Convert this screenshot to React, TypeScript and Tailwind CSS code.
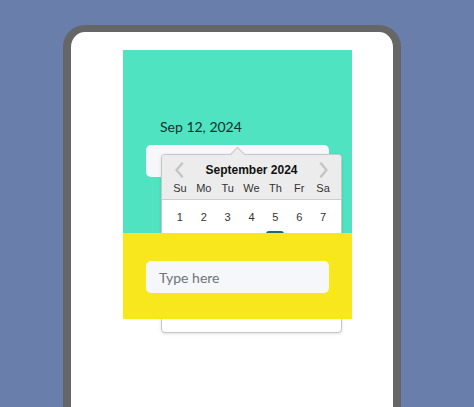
import React from "react";

const days = ["Su", "Mo", "Tu", "We", "Th", "Fr", "Sa"];
const row1 = [1, 2, 3, 4, 5, 6, 7];
const row2 = [8, 9, 10, 11, 12, 13, 14];

function Chevron({ dir }: { dir: "left" | "right" }) {
  return (
    <svg width="10" height="16" viewBox="0 0 10 16" fill="none">
      <path
        d={dir === "left" ? "M8 1.5 L2.5 8 L8 14.5" : "M2 1.5 L7.5 8 L2 14.5"}
        stroke="#c4c4c4"
        strokeWidth="2.4"
        strokeLinecap="round"
        strokeLinejoin="round"
      />
    </svg>
  );
}

export default function App() {
  return (
    <div className="w-[474px] h-[407px] overflow-hidden bg-[#6a7eab] pt-[25px] pl-[63px]">
      <div className="w-[338px] h-[400px] rounded-t-[22px] border-[8px] border-t-[7px] border-b-0 border-[#666666] bg-white pt-[18px] pl-[52px]">
        <div className="relative w-[229px] h-[183px] bg-[#50e3c2] pt-[67px] pl-[23px] font-['Lato','Noto_Sans',sans-serif]">
          <div className="pl-[14px] h-[20px] leading-[20px] text-[14px] text-[#14302b]">Sep 12, 2024</div>
          <div className="mt-[8px] w-[183px] h-[32px] rounded-[5px] bg-[#f5f7fa]" />
          {/* popup */}
          <div className="absolute left-[38px] top-[104px] z-10 w-[181px] h-[179px] rounded-[4px] border border-[#c6c6c6] bg-white shadow-[0_1px_3px_rgba(0,0,0,0.12)] font-['Liberation_Sans',Arial,sans-serif]">
            <div className="absolute left-[70px] -top-[6px] w-[11px] h-[11px] rotate-45 border-t border-l border-[#c6c6c6] bg-[#ececec]" />
            <div className="relative rounded-t-[4px] bg-[#ececec] border-b border-[#cccccc] pt-[5px] pb-[3px]">
              <div className="flex items-center justify-between h-[20px] px-[12px]">
                <Chevron dir="left" />
                <span className="text-[12px] font-bold text-[#111]">September 2024</span>
                <Chevron dir="right" />
              </div>
              <div className="grid grid-cols-7 px-[6px] h-[16px] items-center">
                {days.map((d) => (
                  <span key={d} className="text-center text-[11px] text-[#333]">{d}</span>
                ))}
              </div>
            </div>
            <div className="px-[6px] pt-[5px]">
              <div className="grid grid-cols-7 h-[24px] items-center">
                {row1.map((d) => (
                  <span key={d} className="text-center text-[11px] text-[#333]">{d}</span>
                ))}
              </div>
              <div className="grid grid-cols-7 h-[24px]">
                {row2.map((d) => (
                  <div key={d} className="flex justify-center pt-[2px]">
                    <span
                      className={
                        d === 12
                          ? "w-[18px] h-[19px] rounded-[3px] bg-[#1d6a6b] text-white text-[11px] flex items-center justify-center"
                          : "w-[18px] h-[19px] text-[#333] text-[11px] flex items-center justify-center"
                      }
                    >
                      {d}
                    </span>
                  </div>
                ))}
              </div>
            </div>
          </div>
        </div>
        <div className="relative z-20 w-[229px] h-[86px] bg-[#f8e71c] pt-[28px] pl-[23px] font-['Lato','Noto_Sans',sans-serif]">
          <div className="w-[183px] h-[32px] rounded-[5px] bg-[#f5f7fa] flex items-center pl-[13px] text-[14px] text-[#6f747b]">
            Type here
          </div>
        </div>
      </div>
    </div>
  );
}
